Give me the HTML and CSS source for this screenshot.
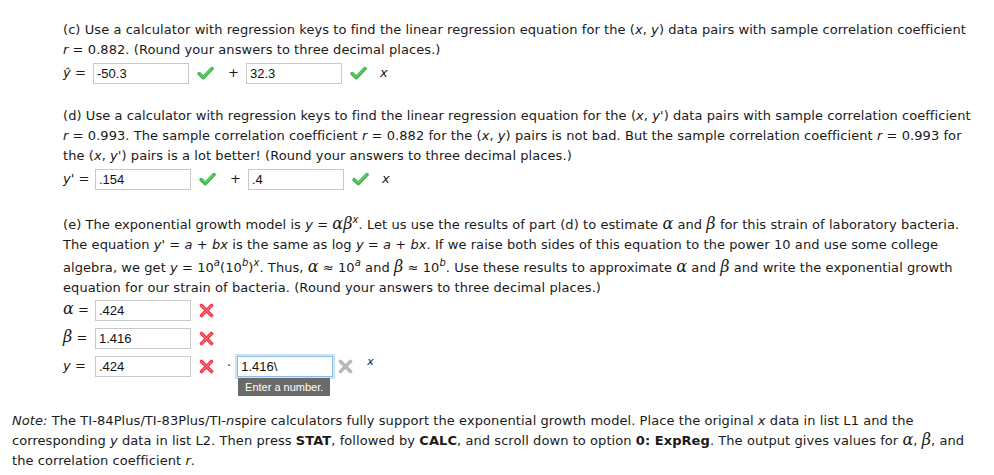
FILE: index.html
```html
<!DOCTYPE html>
<html>
<head>
<meta charset="utf-8">
<link rel="stylesheet" href="styles.css">
</head>
<body>
<div class="page">
  <section class="part part-c">
    <p class="text">(c) Use a calculator with regression keys to find the linear regression equation for the (<i>x</i>, <i>y</i>) data pairs with sample correlation coefficient<br><i>r</i> = 0.882. (Round your answers to three decimal places.)</p>
    <div class="row">
      <span class="lbl lbl-c"><i>ŷ</i> =</span>
      <input class="field" type="text" value="-50.3">
      <svg class="ok" width="17" height="14" viewBox="0 0 17 14"><path d="M2.2 7.6 L6.4 11.6 L15 2.6" fill="none" stroke="#3fb84a" stroke-width="3.6" stroke-linecap="round" stroke-linejoin="round"/><path d="M2.6 7.4 L6.4 10.8 L14.6 2.6" fill="none" stroke="#7fdc84" stroke-width="1" stroke-linecap="round" stroke-linejoin="round"/></svg>
      <span class="op">+</span>
      <input class="field" type="text" value="32.3">
      <svg class="ok" width="17" height="14" viewBox="0 0 17 14"><path d="M2.2 7.6 L6.4 11.6 L15 2.6" fill="none" stroke="#3fb84a" stroke-width="3.6" stroke-linecap="round" stroke-linejoin="round"/><path d="M2.6 7.4 L6.4 10.8 L14.6 2.6" fill="none" stroke="#7fdc84" stroke-width="1" stroke-linecap="round" stroke-linejoin="round"/></svg>
      <i class="tail">x</i>
    </div>
  </section>

  <section class="part part-d">
    <p class="text">(d) Use a calculator with regression keys to find the linear regression equation for the (<i>x</i>, <i>y</i>') data pairs with sample correlation coefficient<br><i>r</i> = 0.993. The sample correlation coefficient <i>r</i> = 0.882 for the (<i>x</i>, <i>y</i>) pairs is not bad. But the sample correlation coefficient <i>r</i> = 0.993 for<br>the (<i>x</i>, <i>y</i>') pairs is a lot better! (Round your answers to three decimal places.)</p>
    <div class="row">
      <span class="lbl lbl-d"><i>y</i>' =</span>
      <input class="field" type="text" value=".154">
      <svg class="ok" width="17" height="14" viewBox="0 0 17 14"><path d="M2.2 7.6 L6.4 11.6 L15 2.6" fill="none" stroke="#3fb84a" stroke-width="3.6" stroke-linecap="round" stroke-linejoin="round"/><path d="M2.6 7.4 L6.4 10.8 L14.6 2.6" fill="none" stroke="#7fdc84" stroke-width="1" stroke-linecap="round" stroke-linejoin="round"/></svg>
      <span class="op">+</span>
      <input class="field" type="text" value=".4">
      <svg class="ok" width="17" height="14" viewBox="0 0 17 14"><path d="M2.2 7.6 L6.4 11.6 L15 2.6" fill="none" stroke="#3fb84a" stroke-width="3.6" stroke-linecap="round" stroke-linejoin="round"/><path d="M2.6 7.4 L6.4 10.8 L14.6 2.6" fill="none" stroke="#7fdc84" stroke-width="1" stroke-linecap="round" stroke-linejoin="round"/></svg>
      <i class="tail">x</i>
    </div>
  </section>

  <section class="part part-e">
    <p class="text">(e) The exponential growth model is <i>y</i> = <span class="g">αβ</span><sup><i>x</i></sup>. Let us use the results of part (d) to estimate <span class="g">α</span> and <span class="g">β</span> for this strain of laboratory bacteria.<br>The equation <i>y</i>' = <i>a</i> + <i>bx</i> is the same as log <i>y</i> = <i>a</i> + <i>bx</i>. If we raise both sides of this equation to the power 10 and use some college<br>algebra, we get <i>y</i> = 10<sup class="hi"><i>a</i></sup>(10<sup class="hi"><i>b</i></sup>)<sup class="hi"><i>x</i></sup>. Thus, <span class="g">α</span> ≈ 10<sup class="hi"><i>a</i></sup> and <span class="g">β</span> ≈ 10<sup class="hi"><i>b</i></sup>. Use these results to approximate <span class="g">α</span> and <span class="g">β</span> and write the exponential growth<br>equation for our strain of bacteria. (Round your answers to three decimal places.)</p>
    <div class="answers">
      <div class="row">
        <span class="lbl lbl-d"><span class="g">α</span> =</span>
        <input class="field" type="text" value=".424">
        <svg class="bad" width="15" height="15" viewBox="0 0 15 15"><path d="M2.5 2.5 L12.5 12.5 M12.5 2.5 L2.5 12.5" fill="none" stroke="#f0404e" stroke-width="3.6" stroke-linecap="round"/><path d="M3 3 L12 12 M12 3 L3 12" fill="none" stroke="#ff7b85" stroke-width="1" stroke-linecap="round"/></svg>
      </div>
      <div class="row">
        <span class="lbl lbl-d"><span class="g">β</span> =</span>
        <input class="field" type="text" value="1.416">
        <svg class="bad" width="15" height="15" viewBox="0 0 15 15"><path d="M2.5 2.5 L12.5 12.5 M12.5 2.5 L2.5 12.5" fill="none" stroke="#f0404e" stroke-width="3.6" stroke-linecap="round"/><path d="M3 3 L12 12 M12 3 L3 12" fill="none" stroke="#ff7b85" stroke-width="1" stroke-linecap="round"/></svg>
      </div>
      <div class="row">
        <span class="lbl lbl-d"><i>y</i> =</span>
        <input class="field" type="text" value=".424">
        <svg class="bad" width="15" height="15" viewBox="0 0 15 15"><path d="M2.5 2.5 L12.5 12.5 M12.5 2.5 L2.5 12.5" fill="none" stroke="#f0404e" stroke-width="3.6" stroke-linecap="round"/><path d="M3 3 L12 12 M12 3 L3 12" fill="none" stroke="#ff7b85" stroke-width="1" stroke-linecap="round"/></svg>
        <span class="dot">·</span>
        <span class="focus-wrap">
          <input class="field field-focus" type="text" value="1.416\">
          <span class="tip">Enter a number.</span>
        </span>
        <svg class="pending" width="15" height="15" viewBox="0 0 15 15"><path d="M2.5 2.5 L12.5 12.5 M12.5 2.5 L2.5 12.5" fill="none" stroke="#b8b8b8" stroke-width="3.6" stroke-linecap="round"/></svg>
        <i class="tail tail-sup">x</i>
      </div>
    </div>
  </section>

  <section class="note">
    <p class="text"><i>Note:</i> The TI-84Plus/TI-83Plus/TI-<i>n</i>spire calculators fully support the exponential growth model. Place the original <i>x</i> data in list L1 and the<br>corresponding <i>y</i> data in list L2. Then press <b>STAT</b>, followed by <b>CALC</b>, and scroll down to option <b>0: ExpReg</b>. The output gives values for <span class="g">α</span>, <span class="g">β</span>, and<br>the correlation coefficient <i>r</i>.</p>
  </section>
</div>
</body>
</html>
```

FILE: styles.css
```css
html, body {
  margin: 0;
  padding: 0;
  background: #ffffff;
}

body {
  font-family: "DejaVu Sans", Verdana, sans-serif;
  font-size: 13px;
  line-height: 20px;
  color: #1a1a1a;
  letter-spacing: 0.07px;
}

.page {
  padding-top: 20px;
}

.part {
  margin-left: 63px;
}

.part-d {
  margin-top: 22px;
}

.part-e {
  margin-top: 25px;
}

.text {
  margin: 0;
  white-space: nowrap;
}

.text sup {
  font-size: 10px;
  line-height: 1;
  vertical-align: 6px;
}

.text sup.hi {
  line-height: 15px;
  vertical-align: 6px;
}

.g {
  font-family: "DejaVu Serif", "Liberation Serif", serif;
  font-style: italic;
  font-size: 16px;
  line-height: 1;
}

.row {
  display: flex;
  align-items: center;
  height: 22px;
  margin-top: 2px;
  white-space: nowrap;
}

.answers {
  margin-top: 1px;
  display: flex;
  flex-direction: column;
  gap: 6px;
}

.answers .row {
  margin-top: 0;
}

.lbl {
  flex: none;
}

.lbl-c {
  width: 30px;
}

.lbl-d {
  width: 32px;
}

.field {
  box-sizing: border-box;
  width: 96px;
  height: 21px;
  margin: 0;
  padding: 0 3px;
  border: 1px solid #c9c9c9;
  border-radius: 0;
  background: #fff;
  font-family: "Liberation Sans", Arial, sans-serif;
  font-size: 13px;
  letter-spacing: 0;
  color: #111;
  outline: none;
}

.field-focus {
  border-color: #8fbde8;
  box-shadow: 0 0 0 2px #cfe3f7;
}

.ok {
  flex: none;
  margin-left: 8px;
}

.bad {
  flex: none;
  margin-left: 8px;
}

.pending {
  flex: none;
  margin-left: 5px;
}

.op {
  margin-left: 14px;
  margin-right: 7px;
}

.tail {
  margin-left: 13px;
}

.tail-sup {
  align-self: flex-start;
  margin-left: 14px;
  margin-top: -3px;
  font-size: 11px;
}

.dot {
  margin-left: 13px;
  margin-right: 6px;
}

.focus-wrap {
  position: relative;
  display: flex;
}

.tip {
  position: absolute;
  left: 1px;
  top: 22px;
  width: 92px;
  height: 18px;
  background: #6a6a6a;
  color: #fff;
  font-family: "Liberation Sans", Arial, sans-serif;
  font-size: 11px;
  letter-spacing: 0;
  line-height: 18px;
  text-align: center;
}

.note {
  margin-left: 12px;
  margin-top: 34px;
}
```
